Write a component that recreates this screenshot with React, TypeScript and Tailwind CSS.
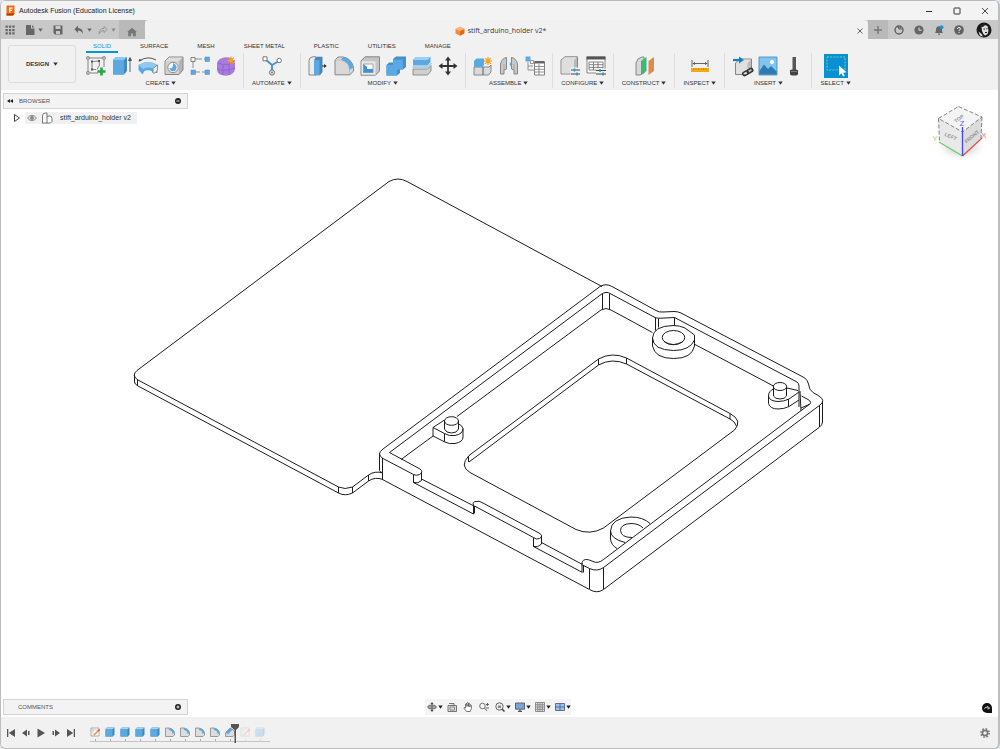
import React from 'react';

type Drawing = React.ReactNode;

interface RibbonGroup {
  label: string;
  tools: { name: string; art: Drawing; active?: boolean }[];
}

const BLUE = '#5ba9e0';
const EDGE = '#7d7d7d';

function Caret({ className = 'text-[#333]' }: { className?: string }) {
  return (
    <svg className={`h-1 w-[5px] shrink-0 ${className}`} viewBox="0 0 5 4" aria-hidden="true">
      <path d="M0.3 0.5h4.4L2.5 3.7z" fill="currentColor" />
    </svg>
  );
}

function Spark({ x, y }: { x: number; y: number }) {
  return (
    <g transform={`translate(${x} ${y})`} stroke="#f39a12" strokeWidth="1.1">
      <path d="M-4 0H4M0-4V4M-2.8-2.8L2.8 2.8M-2.8 2.8L2.8-2.8" />
      <circle r="1.9" fill="#f9a51a" stroke="none" />
    </g>
  );
}

const art = {
  sketch: (
    <>
      <path d="M3 2H17M2 4V16M18 4V11M4 17H12" stroke="#777" strokeWidth="0.9" fill="none" />
      <path d="M0.8 0.8h2.4v2.4H0.8zM16.8 0.8h2.4v2.4h-2.4zM0.8 15.8h2.4v2.4H0.8z" fill="#f4f4f4" stroke="#666" strokeWidth="0.8" />
      <path d="M6 6V13.5H10M6 5.5L13 5Q15 9 11 13.5" stroke="#666" strokeWidth="0.8" fill="none" />
      <path d="M5 4.5h2v2H5zM5 12.5h2v2H5zM12 4h2v2h-2z" fill="#555" />
      <path d="M15.5 11.5v8M11.5 15.5h8" stroke="#21a84a" strokeWidth="2.6" />
    </>
  ),
  extrude: (
    <>
      <path d="M1 4L4 1H15V15L12 18.5H1z" fill="#4389c0" />
      <path d="M1 4L4 1H15L12 4z" fill="#8cc8ef" />
      <path d="M1 4H12V18.5H1z" fill={BLUE} />
      <path d="M18 16V3M16.5 4.5L18 1.5 19.5 4.5z" stroke="#555" strokeWidth="0.9" fill="#555" />
    </>
  ),
  revolve: (
    <>
      <path d="M0.5 9Q10 3 19.5 9V17H15L13.5 15Q10 13.5 6.500 15L4.500 18.5 0.5 14z" fill={BLUE} />
      <path d="M0.5 9Q10 3 19.5 9L15 12.5Q10 10.5 5 13z" fill="#91caee" />
      <path d="M15 12.5L19.5 9V14L17 17H15z" fill="#eee" stroke={EDGE} strokeWidth="0.8" />
      <path d="M2 4.5Q10-0.5 18 4" stroke="#555" strokeWidth="1" fill="none" />
      <path d="M0.5 5.500L1.500 2.700 4 4.700z" fill="#444" />
    </>
  ),
  hole: (
    <>
      <path d="M1 5L5 1H19V14L15 18.5H1z" fill="#b5b5b5" stroke={EDGE} strokeWidth="0.9" />
      <path d="M1.5 5L5 1.4H18.6L15 5z" fill="#dedede" />
      <path d="M1.500 5H15V18H1.500z" fill="#d2d2d2" />
      <circle cx="9" cy="11.5" r="5.2" fill="#f6f6f6" stroke="#777" strokeWidth="0.8" />
      <path d="M9 7Q14 9 12 14Q8 17 5 12.500Q10 12.5 9 7z" fill={BLUE} />
    </>
  ),
  pattern: (
    <>
      <path d="M3 3H16M3 3V16H17" stroke="#888" strokeWidth="0.9" fill="none" strokeDasharray="9 2" />
      <path d="M1 1.5h4v4H1z" fill="#f4f4f4" stroke="#777" strokeWidth="0.9" />
      <path d="M15 1h4.5v4.5H15zM1 14h4.5v4.5H1zM15 14h4.5v4.5H15z" fill={BLUE} stroke="#438dc4" strokeWidth="0.5" />
    </>
  ),
  form: (
    <>
      <path d="M1 8Q1 4 5 2.5Q10 0.5 15 2Q19 4 19 8V13Q18.5 17 14 19Q8 20.5 4 18.500Q1 17 1 13z" fill="#a77be0" />
      <path d="M2 7Q7 10 13 8Q17 6.5 18.5 5M13 8V19M7 9V19M1 13Q8 16 19 12" stroke="#8a5fca" strokeWidth="0.8" fill="none" />
      <Spark x={15} y={4.5} />
    </>
  ),
  automate: (
    <>
      <path d="M3 3L10 9 17 5M10 9V17" stroke="#4c93c6" strokeWidth="1.9" fill="none" />
      <path d="M1 0.8h4v4H1z" fill="#fff" stroke="#777" />
      <circle cx="17.2" cy="4.5" r="2.2" fill="#fff" stroke="#777" />
      <circle cx="10" cy="16.5" r="2.6" fill="#ddd" stroke="#777" />
      <circle cx="10" cy="16.5" r="0.9" fill="#777" />
    </>
  ),
  pressPull: (
    <>
      <path d="M1 4.5Q1 1 5 0.8H8V19H1z" fill="#ececec" stroke={EDGE} strokeWidth="0.9" />
      <path d="M6 4L8.5 0.8H14.5V16L12 19.2H6z" fill="#4389c0" />
      <path d="M6 4H11.5V19.2H6z" fill={BLUE} />
      <path d="M14 10H17" stroke="#333" />
      <path d="M16 8L18.8 10 16 12z" fill="#333" />
    </>
  ),
  fillet: (
    <>
      <path d="M1 4L4 1H9Q17 2 19.5 11V15L16 18.8H1z" fill="#d9d9d9" stroke={EDGE} strokeWidth="0.9" />
      <path d="M9 1.2Q17 1.5 19.3 11.5L15.5 14Q15 6 7 4z" fill={BLUE} />
      <path d="M1 4H7Q15 6 15.5 14V18.8" stroke="#b5b5b5" strokeWidth="0.7" fill="none" />
    </>
  ),
  shell: (
    <>
      <path d="M1 5L5 0.8H19.5V15L15.5 19.2H1z" fill="#c4c4c4" stroke={EDGE} strokeWidth="0.9" />
      <path d="M1.5 5.2H15.5V18.7H1.5z" fill="#e6e6e6" />
      <path d="M3.5 8H13V16.5H3.5z" fill="#fff" stroke="#888" strokeWidth="0.7" />
      <path d="M3.5 8L7 11V13L3.5 16.500zM3.5 16.5L7 13H13V16.500z" fill="#3f93d2" />
    </>
  ),
  combine: (
    <>
      <path d="M7 3L10 0.5H20V11L17 13.5H14V17L11 19.5H0.5V9L3 6.5H7z" fill="#4391cb" />
      <path d="M0.5 9H7V3.5H17V13.5H11V19.5H0.5z" fill={BLUE} />
    </>
  ),
  split: (
    <>
      <path d="M1 4L4 1H18.5V6L15.5 9.5H1z" fill={BLUE} />
      <path d="M1 4L4 1H18.5L15.5 4z" fill="#9ad0f2" />
      <path d="M0.5 11H15.5L19.5 7" stroke={BLUE} strokeWidth="0.9" fill="none" />
      <path d="M1 13H15.5L19 9.5V15L15.5 19H1z" fill="#cfcfcf" stroke={EDGE} strokeWidth="0.8" />
    </>
  ),
  move: (
    <path
      d="M10 0.5L13 4.5H10.9V9.1H15.5V7L19.5 10 15.5 13V10.9H10.9V15.5H13L10 19.5 7 15.5H9.1V10.9H4.5V13L0.5 10 4.5 7V9.1H9.1V4.5H7z"
      fill="#333"
    />
  ),
  newComponent: (
    <>
      <path d="M1 11H10V19H1zM10 11H16L18 9V16L15.5 19H10z" fill="#dadada" stroke={EDGE} strokeWidth="0.9" />
      <path d="M1 5L3.5 2.5H11V9L9.500 11H1z" fill={BLUE} />
      <Spark x={15} y={5} />
    </>
  ),
  joint: (
    <>
      <path d="M1.5 8Q3 2 7.5 1.5V13L5 14V18H1.5zM18.5 8Q17 2 12.5 1.5V13L15 14V18H18.5z" fill="#c9c9c9" stroke={EDGE} strokeWidth="0.9" />
      <path d="M12.5 5L10.5 8 12.5 12z" fill={BLUE} />
      <path d="M5 8V14M15 8V14" stroke="#999" strokeWidth="0.7" />
    </>
  ),
  bom: (
    <>
      <path d="M0.5 0.5h5v5h-5z" fill={BLUE} />
      <path d="M5.5 4.5h3v3h-3z" fill="#fff" stroke={EDGE} strokeWidth="0.8" />
      <path d="M3 6V14H9M3 10H8" stroke="#888" strokeWidth="0.9" fill="none" />
      <path d="M9.5 6H19.5V19H9.5z" fill="#fff" stroke="#777" strokeWidth="0.9" />
      <path d="M9.5 5H19.5V7.5H9.5z" fill="#666" />
      <path d="M9.5 10.5H19.5M9.5 13.3H19.5M9.5 16H19.5M14 8V19" stroke="#777" strokeWidth="0.8" />
    </>
  ),
  configure: (
    <>
      <path d="M1 4L5 0.8H17.5V14L14 18H1z" fill="#b9b9b9" stroke={EDGE} strokeWidth="0.9" />
      <path d="M1.5 4.3L5 1.200H17L14 4.3V17.5H1.5z" fill="#dedede" />
      <path d="M10.500 11.500H20V20H10.500z" fill="#f1f1f1" />
      <path d="M11 14H20M11 18H20" stroke="#444" strokeWidth="1.1" />
      <path d="M14.5 12.5v3M17 16.5v3" stroke="#2293d0" strokeWidth="1.5" />
    </>
  ),
  configTable: (
    <>
      <path d="M1 1H19V17H1z" fill="#fff" stroke="#777" strokeWidth="0.9" />
      <path d="M0.5 0.5H19.5V3.5H0.5z" fill="#555" />
      <path d="M3 6H17V14H3zM3 8.700H17M3 11.400H17M7.500 6V14M12 6V14" stroke="#777" strokeWidth="0.9" fill="none" />
      <path d="M10 12.500H20V20H10z" fill="#f1f1f1" />
      <path d="M10 14.5H20M10 18H20" stroke="#444" strokeWidth="1.1" />
      <path d="M14 13v3M17 16.5v3" stroke="#2293d0" strokeWidth="1.5" />
    </>
  ),
  plane: (
    <>
      <path d="M2 7Q3 2 8 1H10V17L6 19H2z" fill="#d8d8d8" stroke={EDGE} strokeWidth="0.9" />
      <path d="M7 5L12.500 1V15L7 19z" fill="#3dba72" />
      <path d="M14.5 5L20 1V15L14.5 19z" fill="#e08950" />
    </>
  ),
  measure: (
    <>
      <path d="M2 4V11M18 4V11M3 7.5H17" stroke="#555" strokeWidth="0.9" />
      <path d="M2.5 7.500L5 6V9zM17.5 7.500L15 6V9z" fill="#555" />
      <path d="M1 12H19V16H1z" fill="#f5a913" />
      <path d="M3.5 12v2M6 12v2M8.5 12v2M11 12v2M13.5 12v2M16 12v2" stroke="#b07f12" strokeWidth="0.6" />
    </>
  ),
  derive: (
    <>
      <path d="M3.500 7L8 3H19.5V15L16 18.5H3.500z" fill="#bcbcbc" stroke={EDGE} strokeWidth="0.9" />
      <path d="M4 7.3L8 3.500H19L15.500 7.3V18H4z" fill="#e0e0e0" />
      <path d="M1 4H8" stroke="#137fc4" strokeWidth="2.200" />
      <path d="M7 0.500L12 4 7 7.500z" fill="#137fc4" />
      <g fill="none" stroke="#333" strokeWidth="1.4">
        <rect x="-3.500" y="-1.800" width="6" height="3.600" rx="1.800" transform="translate(14 17) rotate(-30)" />
        <rect x="-2.500" y="-1.800" width="6" height="3.600" rx="1.800" transform="translate(17.500 15) rotate(-30)" />
      </g>
    </>
  ),
  canvas: (
    <>
      <path d="M1 1H19V19H1z" fill="#83c5ef" stroke="#3c89bd" strokeWidth="0.8" />
      <path d="M1.4 15L6 8.5 10 13 13 10 18.6 15.5V18.6H1.4z" fill="#2e79ad" />
      <circle cx="14" cy="6" r="2" fill="#fff" />
    </>
  ),
  bolt: (
    <>
      <path d="M8.500 1H12V14H8.500z" fill="#555" />
      <path d="M6 14.5Q6 13.5 10 13.5T14 14.5V18Q14 19.5 10 19.5T6 18z" fill="#444" />
      <path d="M7 15.5H13" stroke="#888" strokeWidth="0.8" />
    </>
  ),
  select: (
    <>
      <path d="M1 1H19V14H1z" fill="none" stroke="#7ed6a0" strokeWidth="0.9" strokeDasharray="2 1.2" />
      <path d="M13 9.500V19.500L15.500 17.3 17 20.500 18.7 19.7 17.3 16.700 20.500 16.2z" fill="#fff" />
    </>
  ),
};

const groups: RibbonGroup[] = [
  {
    label: 'CREATE',
    tools: [
      { name: 'Create Sketch', art: art.sketch },
      { name: 'Extrude', art: art.extrude },
      { name: 'Revolve', art: art.revolve },
      { name: 'Hole', art: art.hole },
      { name: 'Pattern', art: art.pattern },
      { name: 'Create Form', art: art.form },
    ],
  },
  { label: 'AUTOMATE', tools: [{ name: 'Automated Modeling', art: art.automate }] },
  {
    label: 'MODIFY',
    tools: [
      { name: 'Press Pull', art: art.pressPull },
      { name: 'Fillet', art: art.fillet },
      { name: 'Shell', art: art.shell },
      { name: 'Combine', art: art.combine },
      { name: 'Split Body', art: art.split },
      { name: 'Move', art: art.move },
    ],
  },
  {
    label: 'ASSEMBLE',
    tools: [
      { name: 'New Component', art: art.newComponent },
      { name: 'Joint', art: art.joint },
      { name: 'Bill of Materials', art: art.bom },
    ],
  },
  {
    label: 'CONFIGURE',
    tools: [
      { name: 'Configure Model', art: art.configure },
      { name: 'Configuration Table', art: art.configTable },
    ],
  },
  { label: 'CONSTRUCT', tools: [{ name: 'Offset Plane', art: art.plane }] },
  { label: 'INSPECT', tools: [{ name: 'Measure', art: art.measure }] },
  {
    label: 'INSERT',
    tools: [
      { name: 'Insert Derive', art: art.derive },
      { name: 'Canvas', art: art.canvas },
      { name: 'Insert Fastener', art: art.bolt },
    ],
  },
  { label: 'SELECT', tools: [{ name: 'Select', art: art.select, active: true }] },
];

const tabs = ['SOLID', 'SURFACE', 'MESH', 'SHEET METAL', 'PLASTIC', 'UTILITIES', 'MANAGE'];

function TitleBar() {
  return (
    <header className="flex h-5 shrink-0 items-center border-t border-[#b9b9b9] bg-[#f3f3f3] pl-[5px]">
      <svg className="h-[11px] w-[9px]" viewBox="0 0 9 11" aria-hidden="true">
        <path d="M1 0.5H8.5V9L7 10.500H0.5V1z" fill="#ef6a12" />
        <path d="M0.5 8.5H8.5L7 10.500H0.5z" fill="#a83f05" />
        <path d="M3 2.5H6.5V3.8H4.4V4.8H6V6H4.4V7.5H3z" fill="#fff" />
      </svg>
      <h1 className="ml-1 flex-1 text-[7px] leading-3 text-[#222]">Autodesk Fusion (Education License)</h1>
      <div className="flex gap-2 pr-[3px]">
        <button className="grid h-4 w-5 place-items-center" aria-label="Minimize">
          <svg className="size-2" viewBox="0 0 8 8"><path d="M1 4.5H7" stroke="#333" /></svg>
        </button>
        <button className="grid h-4 w-5 place-items-center" aria-label="Maximize">
          <svg className="size-2" viewBox="0 0 8 8"><rect x="1" y="1" width="6" height="6" rx="0.5" stroke="#333" fill="none" /></svg>
        </button>
        <button className="grid h-4 w-5 place-items-center" aria-label="Close">
          <svg className="size-2" viewBox="0 0 8 8"><path d="M1 1L7 7M7 1L1 7" stroke="#333" strokeWidth="0.9" /></svg>
        </button>
      </div>
    </header>
  );
}

function TabBar() {
  return (
    <div className="flex h-[19px] shrink-0 bg-[#c8c8c8] text-[#666]">
      <div className="flex items-center pl-1">
        <button className="mr-2.5" aria-label="Data panel">
          <svg className="size-2.5" viewBox="0 0 10 10">
            <path d="M0.5 0.5h2.3v2.3H.5zM3.9.5h2.3v2.3H3.9zM7.3.5h2.3v2.3H7.3zM.5 3.9h2.3v2.3H.5zM3.9 3.9h2.3v2.3H3.9zM7.3 3.9h2.3v2.3H7.3zM.5 7.3h2.3v2.3H.5zM3.9 7.3h2.3v2.3H3.9zM7.3 7.3h2.3v2.3H7.3z" fill="currentColor" />
          </svg>
        </button>
        <button className="mr-2.5 flex items-center gap-[3px]" aria-label="File">
          <svg className="size-2.5" viewBox="0 0 10 10"><path d="M1 0H6V3.5H9.5V10H1zM7 0L9.5 2.5H7z" fill="currentColor" /></svg>
          <Caret className="text-[#666]" />
        </button>
        <button className="mr-[11px]" aria-label="Save">
          <svg className="size-2.5" viewBox="0 0 10 10"><path d="M0.5 0.5H9.5V9.5H2L.5 8zM2.5 1V4H7.5V1zM3 6V9H7V6z" fill="currentColor" fillRule="evenodd" /></svg>
        </button>
        <button className="mr-1.5 flex items-center gap-[3px]" aria-label="Undo">
          <svg className="size-2.5" viewBox="0 0 10 10"><path d="M4 0.5V3Q9 3 9 9Q7.5 5.5 4 5.5V8L0.5 4.3z" fill="currentColor" /></svg>
          <Caret className="text-[#666]" />
        </button>
        <button className="mr-[3px] flex items-center gap-[3px] text-[#929292]" aria-label="Redo">
          <svg className="size-2.5" viewBox="0 0 10 10"><path d="M6 1.5V3.5Q1 3.5 1 9Q2.5 5.5 6 5.5V7.5L9.3 4.5z" fill="none" stroke="currentColor" strokeWidth="0.9" /></svg>
          <Caret className="text-[#8a8a8a]" />
        </button>
        <button className="grid h-full w-[26px] place-items-center bg-[#b9b9b9] pt-1" aria-label="Home">
          <svg className="size-2.5" viewBox="0 0 10 10"><path d="M5 0.8L9.5 4.5 8.8 5.2V9.2H6V6.5H4V9.2H1.2V5.2L.5 4.5z" fill="#777" /></svg>
        </button>
      </div>
      <div className="flex flex-1 items-center rounded-t-sm bg-[#f1f1f1] pt-0.5">
        <div className="flex flex-1 items-center justify-center gap-[3px]">
          <svg className="size-2.5" viewBox="0 0 10 10" aria-hidden="true">
            <path d="M5 0.5L9.5 2.7 5 5 .5 2.7z" fill="#ffb07a" />
            <path d="M.5 2.7L5 5V9.8L.5 7.5z" fill="#f58a3c" />
            <path d="M9.5 2.7L5 5V9.8L9.5 7.5z" fill="#e26a14" />
          </svg>
          <span className="font-['Open_Sans','Liberation_Sans',sans-serif] text-[7px] leading-3 text-[#3a3a3a]">stift_arduino_holder v2*</span>
        </div>
        <button className="mr-1" aria-label="Close document">
          <svg className="size-2" viewBox="0 0 8 8"><path d="M1.5 1.5L6.5 6.5M6.5 1.5L1.5 6.5" stroke="#666" /></svg>
        </button>
      </div>
      <button className="grid w-5 place-items-center bg-[#b9b9b9]" aria-label="New design">
        <svg className="size-2.5" viewBox="0 0 10 10"><path d="M5 1V9M1 5H9" stroke="#777" strokeWidth="1.4" /></svg>
      </button>
      <div className="flex items-center gap-2.5 px-1.5">
        <button aria-label="Extensions">
          <svg className="size-2.5" viewBox="0 0 10 10"><circle cx="5" cy="5" r="4" fill="none" stroke="#5f5f5f" strokeWidth="1.4" /><path d="M3 1L5.5 4H8.5M5.5 4L6.5 2" stroke="#5f5f5f" strokeWidth="1.2" fill="none" /></svg>
        </button>
        <button aria-label="Job status">
          <svg className="size-2.5" viewBox="0 0 10 10"><circle cx="5" cy="5" r="4.6" fill="#666" /><path d="M5 2.5V5.2H7.5" stroke="#ddd" fill="none" /></svg>
        </button>
        <button aria-label="Notifications">
          <svg className="size-2.5" viewBox="0 0 10 10"><path d="M1 8Q2 7 2 4.5Q2 1.5 4.8 1.2T8 4.5Q8 7 9 8zM4 8.5H6V9.7H4z" fill="#666" /><circle cx="7.5" cy="2.2" r="2" fill="#1496d8" /></svg>
        </button>
        <button aria-label="Help">
          <svg className="size-2.5" viewBox="0 0 10 10"><circle cx="5" cy="5" r="4.8" fill="#606060" /><path d="M3.5 4Q3.5 2.5 5 2.5T6.5 4Q6.5 4.600 5 5.5V6.2M5 7V8" stroke="#fff" strokeWidth="0.9" fill="none" /></svg>
        </button>
        <button className="ml-0.5" aria-label="Account">
          <svg className="size-4" viewBox="0 0 16 16">
            <circle cx="8" cy="8" r="7.5" fill="#191919" />
            <path d="M5.5 5Q8 2 11.5 4L12.500 8.500Q12 13 9 13.500Q7 12.5 6 9z" fill="#ddd" />
            <path d="M5 5Q8 5.500 9 2.500L6 2z" fill="#222" />
            <path d="M2.500 9.500Q5 11 7 14.500L4 13.5z" fill="#eee" />
            <path d="M7.5 7H9M10.300 6.800H11.500M9 10.500H11" stroke="#222" strokeWidth="1" />
          </svg>
        </button>
      </div>
    </div>
  );
}

function Ribbon() {
  return (
    <div className="flex h-[51px] shrink-0 bg-[#f1f1f1] text-[6px] leading-2 text-[#333]">
      <div className="w-[78px] shrink-0 pt-1.5 pl-[7px]">
        <button className="flex h-[38px] w-[68px] items-center justify-center gap-1 rounded-[3px] border border-[#dcdcdc] font-bold">
          DESIGN <Caret />
        </button>
      </div>
      <div className="flex min-w-0 flex-1 flex-col">
        <nav className="flex gap-[15px] pl-[7px]">
          {tabs.map((tab, i) => (
            <button
              key={tab}
              className={
                i === 0
                  ? 'h-3.5 border-b-2 border-[#0696d7] px-[7px] pt-px whitespace-nowrap text-[#0696d7]'
                  : 'h-3.5 border-b-2 border-transparent px-[7px] pt-px whitespace-nowrap'
              }
            >
              {tab}
            </button>
          ))}
        </nav>
        <div className="flex">
          {groups.map((group) => (
            <div
              key={group.label}
              className={
                group.tools.length === 1
                  ? 'flex h-[35px] flex-col items-center border-r border-[#dedede] px-2 last:border-r-0'
                  : 'flex h-[35px] flex-col items-center border-r border-[#dedede] px-[7px] last:border-r-0'
              }
            >
              <div className="flex h-[25px] items-center gap-1.5">
                {group.tools.map((tool) => (
                  <button
                    key={tool.name}
                    aria-label={tool.name}
                    className={tool.active ? 'grid size-6 place-items-center bg-[#0a8fd3]' : 'size-5'}
                  >
                    <svg className="size-5 overflow-visible" viewBox="0 0 20 20">{tool.art}</svg>
                  </button>
                ))}
              </div>
              <button className="flex items-center gap-0.5 pt-px whitespace-nowrap">
                {group.label} <Caret />
              </button>
            </div>
          ))}
        </div>
      </div>
    </div>
  );
}

// Wireframe of the holder: hinged plate on the left, open tray on the right
function Model() {
  return (
    <svg className="absolute inset-0 h-full w-full" viewBox="1 90 997 627" role="img" aria-label="stift_arduino_holder model">
      <g fill="none" stroke="#1c1c1c" strokeWidth="1" strokeLinejoin="round">
        {/* plate */}
        <path d="M602 286.500L407 181.5Q398 176.500 389 181.5L137 370.500Q131 375.500 138 380L338.5 487Q345 490 352.5 487L368.5 475Q375 470.500 383 473" />
        <path d="M134.500 375V382Q134.500 384 138 386L338.5 493Q345 496.500 352.5 493L368.5 481Q375 476.500 383 479.500" />
        <path d="M137.5 380V386M338.5 487V493M352.5 487V493M368.5 475V481" />

        {/* tray, outer rim */}
        <path d="M413.5 474.5L383 458.5Q376 454 383 449L600 286.5Q606 283 612 286.5L656 310.5Q659 312.5 663 312L674 311.5Q678 311.5 681 313L804 377.5Q808 380 808.5 384Q809 390 813 392.5L819 396Q826 400.5 820 405L603.5 567.5Q597 572 589.5 568.5L581.5 564.5" />
        <path d="M379.5 453V470.5Q380 472 383 473M382.5 458V479.5L589.5 589.500Q597 594 603.5 589.500L819 427.500Q822.5 425 822.5 422V401M819.5 405.5V427M589.5 568.5V589M603.5 567.5V589" />

        {/* tray, inner rim */}
        <path d="M420 469L389.5 452.5 601 294.5Q606 290.5 611 294L655 317.5Q657 318.5 661 318.2L674.5 317.5 797 382Q799 383.5 799 386V407M800 391L801 411M801.5 396L808 399.5Q813 402.5 808.5 405L603.5 559.5Q598 564 593 561.5Q588 559 585.5 559.5Q581.5 560.5 582 564" />
        <path d="M801 408L809 404.500" />

        {/* tray, floor edges and inside corners */}
        <path d="M401 459.5L433 436M457 416.5L601 310Q606 307 611 310L652.5 332.5M695 344.5L773.5 386" />
        <path d="M602.5 293.5V309.5M609.5 293.5V309.5M655.5 318V330.5M658.5 318.5V327.5M674.5 317.5V325.5" />

        {/* front wall notches */}
        <path d="M420 469Q424 472 419.5 474.5Q416 476 413.5 474.5V482.5L473.5 514V505Q472 502 476 501.5Q479 500.5 482 502.5L539 533Q544 536 539.5 538.5Q536 540 533.5 537.5L474.5 506V513.5" />
        <path d="M421.5 472V480.5Q418 484 413.5 482.5M421.5 479L473 505.5" />
        <path d="M533.5 537.5V546.5L582.5 572.5M541.5 536V544Q538 548 533.5 546.5M541.5 542.5L581.5 564M582 563V572M583.5 565V572.5" />

        {/* floor opening */}
        <path d="M469 455.5L598.5 359Q612 351.500 626.5 358L730 413.500Q743 420.500 734.5 430L603.5 528Q590 535.500 576 529.500L470 472.5Q459 466 469 455.5" />
        <path d="M469 462L598.5 365Q612 357.500 626.5 364L730 419Q735 421.5 736.5 426" />
        <path d="M468.5 456V462M598.5 359V365M626.5 358V364M730 413.500V419" />

        {/* ring bosses */}
        <path d="M652.5 338Q653 326 673 325.5Q680 325.5 685 328L694.5 335V340Q690 350.5 673.5 350.5Q653 350 652.5 338V346Q655 358.5 673.5 358.5Q692 358.5 694.5 346V338" />
        <ellipse cx="673.5" cy="337.5" rx="11.3" ry="7" />
        <path d="M664 341.5Q673 348 683 341.5" />
        <path d="M650 523.5Q643 517 631 517Q611 518 610.5 531Q611 539 625 542.5M610.5 531V539Q611 545 617 548.5" />
        <path d="M643 528Q639 523.5 631 523.5Q620.500 524 620.5 530.5Q621 537.5 632 537.5" />

        {/* pin bosses */}
        <ellipse cx="451.5" cy="421" rx="7" ry="4.3" />
        <path d="M444.5 421V429Q446 433 451.5 433T458.5 429V421" />
        <path d="M444.5 420L433 427.5 444.5 433.5Q449 436.5 455 435.5Q463 434 463 428.5Q462 425 458.5 424M433 427.5V436L444.5 441.8Q449 444.5 455 443.5Q463 442 463 437V428.5M444.5 433.5V441.8" />
        <ellipse cx="780" cy="386.5" rx="6.7" ry="4" />
        <path d="M773.5 386.5V396Q775 399 780 399T786.5 396V386.5" />
        <path d="M773.5 389Q768.5 391 768.5 396Q769 401 778 401.5Q784 401.5 789 399L799 392M787 388L798 390.5M768.5 396V403.5Q770 409 778 409Q784 409 789 406.5L799 400M788.5 399V406.5" />
      </g>
    </svg>
  );
}

function ViewCube() {
  return (
    <svg className="size-16" viewBox="928 102 64 64" role="img" aria-label="View cube">
      <defs>
        <radialGradient id="cubeShade"><stop stopColor="#999" /><stop offset="1" stopColor="#fff" stopOpacity="0" /></radialGradient>
      </defs>
      <ellipse cx="961" cy="147" rx="27" ry="16" fill="url(#cubeShade)" />
      <path d="M958.500 107.500L982 118 962.5 133 938.5 119.5z" fill="#f4f4f4" />
      <path d="M938.5 119.5L962.5 133V157L939.5 142z" fill="#e9e9e9" />
      <path d="M982 118L962.5 133V157L981 139z" fill="#dcdcdc" />
      <path d="M958.5 107.5L982 118 962.5 133 938.5 119.5zM938.5 119.5L939.5 142M982 118L981 139" fill="none" stroke="#777" strokeWidth="0.9" strokeDasharray="4 2" />
      <g fontSize="5" fontWeight="bold" fill="#909090" textAnchor="middle">
        <text transform="translate(950 139) rotate(24)">LEFT</text>
        <text transform="translate(973 139) rotate(-40)">FRONT</text>
        <text transform="translate(960 121) rotate(-35)">TOP</text>
      </g>
      <path d="M962.5 157L939 143" stroke="#66cf66" strokeWidth="1.3" />
      <path d="M962.5 157L982 139" stroke="#d95454" strokeWidth="1.3" />
      <path d="M962.5 157V128" stroke="#4a4ae6" strokeWidth="1.4" />
      <g fontSize="8" textAnchor="middle">
        <text x="935" y="142" fill="#7fe47f">Y</text>
        <text x="984" y="139" fill="#ef7070">X</text>
        <text x="962" y="127" fill="#5c5cf0">Z</text>
      </g>
    </svg>
  );
}

function PanelDot({ plus = false }: { plus?: boolean }) {
  return (
    <svg className="size-1.5" viewBox="0 0 6 6">
      <circle cx="3" cy="3" r="3" fill="#222" />
      <path d={plus ? 'M1.5 3H4.5M3 1.5V4.5' : 'M1.5 3H4.5'} stroke="#fff" strokeWidth="0.9" />
    </svg>
  );
}

const navTools: { name: string; art: Drawing; menu?: boolean }[] = [
  { name: 'Orbit', menu: true, art: <><path d="M5 1V9M1 5H9" stroke="#555" /><ellipse cx="5" cy="5" rx="4.3" ry="2" fill="none" stroke="#555" strokeWidth="0.9" /><path d="M3.5 2L5 0 6.5 2zM3.5 8L5 10 6.5 8z" fill="#444" /></> },
  { name: 'Look At', art: <><path d="M1 3.5H9.5V9.5H1zM2 1.5H7V3.5" fill="#ddd" stroke="#666" strokeWidth="0.9" /><path d="M3 5H7.5V8H3z" fill="none" stroke="#777" strokeWidth="0.8" /></> },
  { name: 'Pan', art: <path d="M3.5 9.5L.8 6Q1 4.8 2.5 6V2Q3.2 1 3.9 2V4.5 1Q4.7 0 5.4 1V4.5 1.5Q6.2.6 6.9 1.8V5 3Q7.8 2.3 8.4 3.3V6.5L7.2 9.5z" fill="#fff" stroke="#555" strokeWidth="0.8" /> },
  { name: 'Zoom', art: <><circle cx="3.5" cy="4" r="2.8" fill="none" stroke="#666" strokeWidth="0.9" /><path d="M5.5 6L8 9M7 2.5H10M8.5 1V4M7 6H10" stroke="#555" strokeWidth="0.9" /></> },
  { name: 'Fit', menu: true, art: <><circle cx="4.5" cy="4.5" r="3.7" fill="#eee" stroke="#555" strokeWidth="0.9" /><path d="M3 3.5H6V6H3z" fill="#888" /><path d="M7 7L9.5 9.5" stroke="#444" strokeWidth="1.5" /></> },
  { name: 'Display Settings', menu: true, art: <><path d="M0.5 1H9.5V7.2H.5z" fill="#7da2d6" stroke="#556" strokeWidth="0.9" /><path d="M3 9.3H7M5 7.5V9" stroke="#555" strokeWidth="1.2" /></> },
  { name: 'Grid and Snaps', menu: true, art: <><path d="M.5.5H9.5V9.5H.5z" fill="#e9e9e9" /><path d="M.5.5H9.5V9.5H.5zM2.8.5V9.5M5 .5V9.5M7.3.5V9.5M.5 2.8H9.5M.5 5H9.5M.5 7.3H9.5" stroke="#777" strokeWidth="0.8" fill="none" /></> },
  { name: 'Viewports', menu: true, art: <path d="M.5 1.5H9.5V8.5H.5zM5 1.5V8.5M.5 5H9.5" fill="#a5c2ea" stroke="#46648f" strokeWidth="0.9" /> },
];

function Viewport() {
  return (
    <main className="relative flex min-h-0 flex-1 flex-col justify-between bg-white">
      <Model />
      <div className="relative flex items-start justify-between pt-[3px] pr-1.5 pl-0.5">
        <aside className="w-[185px] text-[#555]">
          <div className="flex h-4 items-center border border-[#d4d4d4] bg-[#f3f3f3] px-[3px] text-[6px] leading-2">
            <button className="mr-1.5" aria-label="Collapse browser">
              <svg className="h-1 w-1.5" viewBox="0 0 6 4"><path d="M3 0V4L0 2zM6 0V4L3 2z" fill="#222" /></svg>
            </button>
            <h2 className="flex-1">BROWSER</h2>
            <button className="mr-[3px]" aria-label="Browser options"><PanelDot /></button>
          </div>
          <div className="mt-[3px] flex h-3 items-center pl-2.5">
            <button className="mr-1" aria-label="Expand component">
              <svg className="h-2.5 w-2" viewBox="0 0 8 10"><path d="M1.5 1.5L6.5 5 1.5 8.500z" fill="none" stroke="#444" /></svg>
            </button>
            <div className="flex h-3 items-center bg-[#f1f1f1] pr-1.5">
              <button className="mx-0.5" aria-label="Toggle visibility">
                <svg className="h-2 w-2.5" viewBox="0 0 10 8"><path d="M.5 4Q5-1.5 9.5 4Q5 9.5.5 4z" fill="#ddd" stroke="#888" strokeWidth="0.9" /><circle cx="5" cy="4" r="1.9" fill="#888" /></svg>
              </button>
              <svg className="ml-0.5 h-3 w-3" viewBox="0 0 12 12" aria-hidden="true">
                <path d="M1.5 4Q1.5 1 4.5 1H6V5.5Q6 4 8 4H9Q11 4.2 11 6.5V9.5L9.5 11H1.5zM6 5.5V11" fill="#fff" stroke="#666" strokeWidth="0.9" />
              </svg>
              <span className="ml-[7px] text-[7px] leading-2 whitespace-nowrap text-[#333]">stift_arduino_holder v2</span>
            </div>
          </div>
        </aside>
        <div className="pt-2"><ViewCube /></div>
      </div>

      <div className="relative grid grid-cols-[1fr_auto_1fr] items-end pr-1.5 pb-0.5 pl-0.5">
        <div className="flex h-4 w-[185px] items-center border border-[#d4d4d4] bg-[#f3f3f3] pr-1.5 pl-3.5 text-[6px] leading-2 text-[#555]">
          <h2 className="flex-1">COMMENTS</h2>
          <button aria-label="Add comment"><PanelDot plus /></button>
        </div>
        <div className="flex h-4 items-center gap-1.5 bg-[#f4f4f4] px-0.5">
          {navTools.map((tool) => (
            <button key={tool.name} className="flex items-center" aria-label={tool.name}>
              <svg className="size-2.5" viewBox="0 0 10 10">{tool.art}</svg>
              {tool.menu && <Caret className="-mr-0.5 ml-px text-[#222]" />}
            </button>
          ))}
        </div>
        <button className="mb-0.5 justify-self-end" aria-label="Assistant">
          <svg className="size-2.5" viewBox="0 0 10 10"><path d="M5 0A5 5 0 0 1 10 5V10H5A5 5 0 0 1 5 0z" fill="#111" /><path d="M2.5 6Q3.5 3 5 4.5T7.5 5M5 3L7.5 5 6 6.5" stroke="#ddd" fill="none" strokeWidth="0.9" /></svg>
        </button>
      </div>
    </main>
  );
}

const playback = [
  { name: 'Go to start', d: 'M1 1H2.3V9H1zM9 1V9L2.8 5z' },
  { name: 'Step back', d: 'M6 1.5V8.5L1 5zM7 3H8.5V7H7z' },
  { name: 'Play', d: 'M1.5 0.5V9.5L9 5z' },
  { name: 'Step forward', d: 'M4 1.5V8.5L9 5zM1.5 3H3V7H1.5z' },
  { name: 'Go to end', d: 'M7.7 1H9V9H7.7zM1 1V9L7.2 5z' },
];

type FeatureKind = 'sketch' | 'extrude' | 'fillet' | 'chamfer';

const history: { kind: FeatureKind; off?: boolean }[] = [
  { kind: 'sketch' },
  { kind: 'extrude' },
  { kind: 'extrude' },
  { kind: 'extrude' },
  { kind: 'extrude' },
  { kind: 'fillet' },
  { kind: 'fillet' },
  { kind: 'fillet' },
  { kind: 'fillet' },
  { kind: 'chamfer' },
  { kind: 'sketch', off: true },
  { kind: 'extrude', off: true },
];

const featureArt: Record<FeatureKind, Drawing> = {
  sketch: (
    <>
      <path d="M1 1H9V9H1z" fill="#fff" stroke="#999" strokeWidth="0.8" />
      <path d="M3 1V9M1 3H9" stroke="#bbb" strokeWidth="0.7" />
      <path d="M4 8L9 3" stroke="#e79a3c" strokeWidth="1.7" />
      <path d="M8 4L9.5 2.5" stroke="#d55" strokeWidth="1.7" />
    </>
  ),
  extrude: (
    <>
      <path d="M.5 2L2 .5H9.5V7.5L8 9.5H.5z" fill="#3d87be" />
      <path d="M.5 2.5H7.5V9.5H.5z" fill="#5ba9e0" />
      <path d="M.5 2.3L2 .5H9.5L7.5 2.3z" fill="#a5d5f3" />
    </>
  ),
  fillet: (
    <>
      <path d="M.5 1H4Q9 2 9.5 6V8L8 9.5H.5z" fill="#ddd" stroke="#888" strokeWidth="0.8" />
      <path d="M3.5 1Q9 1.5 9.5 6L7.5 7Q7.5 3.5 4 3z" fill="#5ba9e0" />
    </>
  ),
  chamfer: (
    <>
      <path d="M.5 6L5 1 9.5 4V8L8 9.5H.5z" fill="#ddd" stroke="#888" strokeWidth="0.8" />
      <path d="M.5 5.5L5 .8 7.5 2.5 3 7.5z" fill="#5ba9e0" />
    </>
  ),
};

function Timeline() {
  return (
    <footer className="flex h-[31px] shrink-0 items-center bg-[#f1f1f1] px-[5px]">
      <div className="flex gap-[5px]">
        {playback.map((step) => (
          <button key={step.name} aria-label={step.name}>
            <svg className="size-2.5" viewBox="0 0 10 10"><path d={step.d} fill="#555" /></svg>
          </button>
        ))}
      </div>
      <div className="relative mt-1 ml-3.5 flex border-b border-[#c4c4c4]">
        {history.map((feature, i) => (
          <button
            key={i}
            aria-label={`${feature.kind} ${i + 1}`}
            className={feature.off ? 'mr-[5px] h-3.5 w-2.5 opacity-25 last:mr-0' : 'mr-[5px] h-3.5 w-2.5 last:mr-0'}
          >
            <svg className="h-3.5 w-2.5" viewBox="0 0 10 14">
              {featureArt[feature.kind]}
              <path d="M5.5 12V14" stroke="#aaa" />
            </svg>
          </button>
        ))}
        <svg className="absolute -top-1 left-[140px] h-5 w-2.5" viewBox="0 0 10 20" aria-hidden="true">
          <path d="M1 1H9V4L6 7V20H4.500V7L1 4z" fill="#555" />
        </svg>
      </div>
      <button className="ml-auto" aria-label="Timeline settings">
        <svg className="size-4" viewBox="0 0 16 16">
          <circle cx="8" cy="8" r="2.6" fill="none" stroke="#777" strokeWidth="1.700" />
          <circle cx="8" cy="8" r="4.2" fill="none" stroke="#777" strokeWidth="1.500" strokeDasharray="1.650 1.650" />
        </svg>
      </button>
    </footer>
  );
}

export default function App() {
  return (
    <div className="h-screen bg-[#dfe6ec] font-['Liberation_Sans',Arial,sans-serif]">
      <div className="flex h-full flex-col overflow-hidden rounded-md border-r-2 border-b border-l border-[#bdbdbd]">
        <TitleBar />
        <TabBar />
        <Ribbon />
        <Viewport />
        <Timeline />
      </div>
    </div>
  );
}
